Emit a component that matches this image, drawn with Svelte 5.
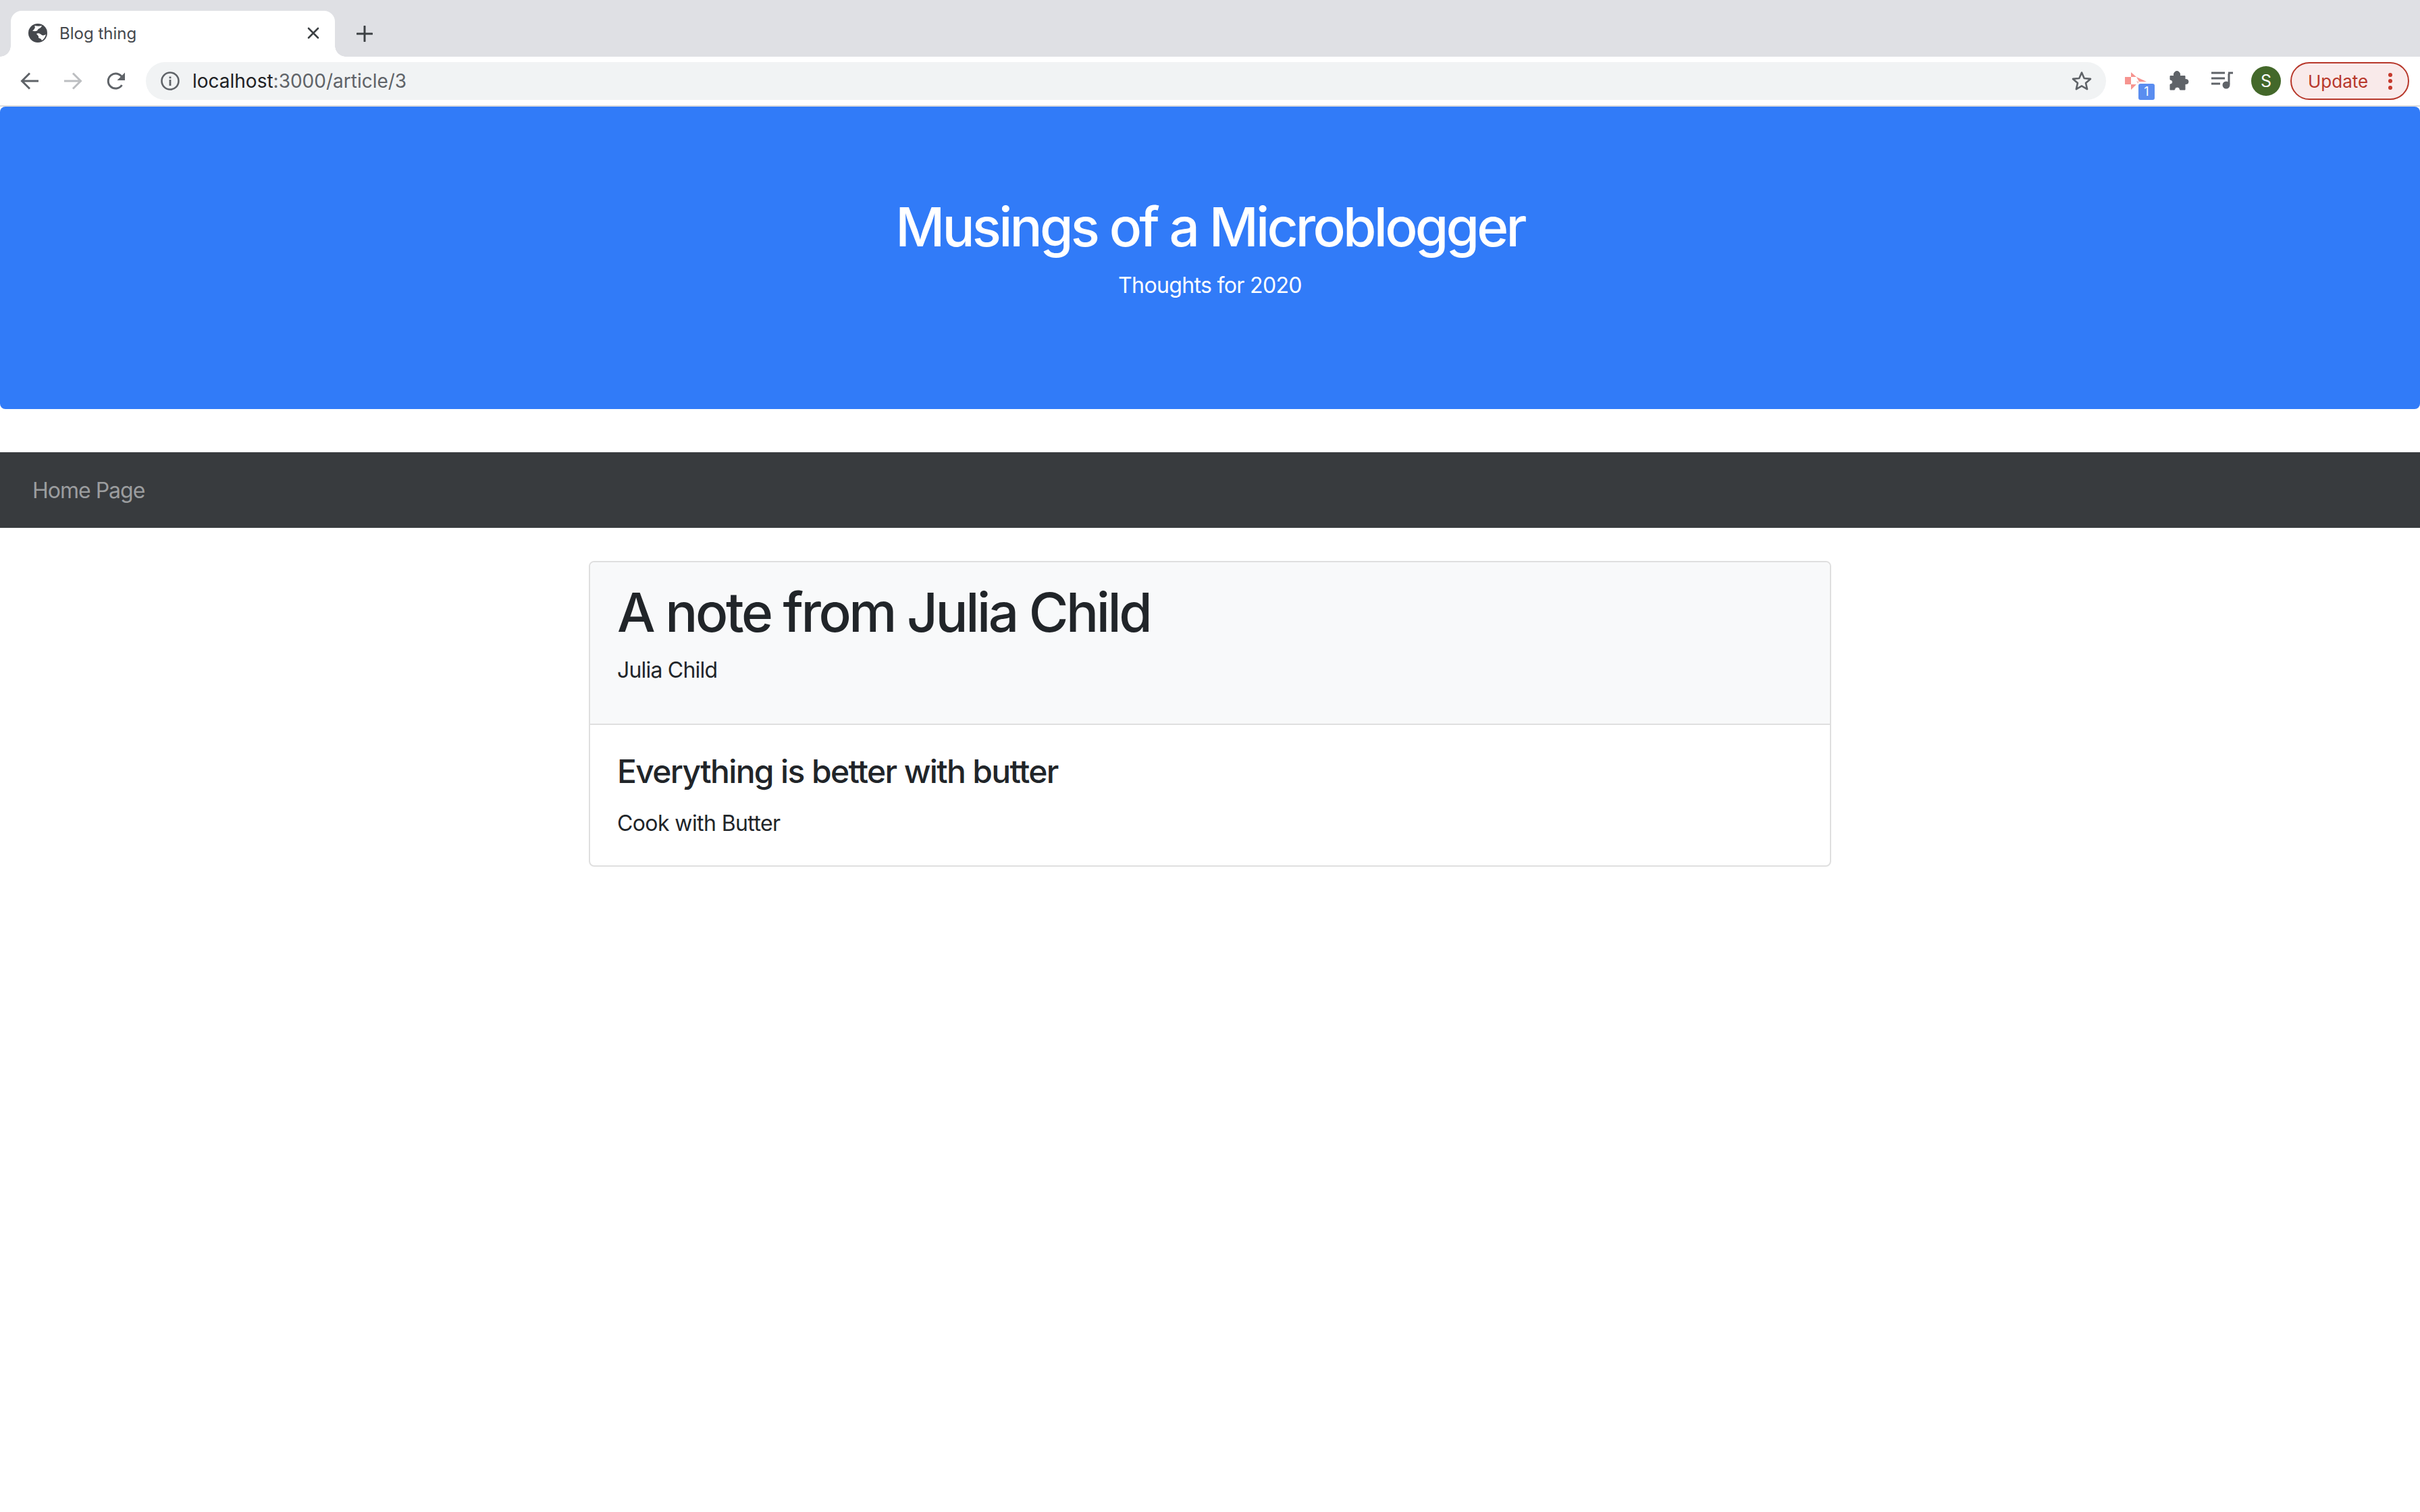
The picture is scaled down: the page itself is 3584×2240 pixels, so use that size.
<script>
    let tabTitle = 'Blog thing';
    let article = {
        title: 'A note from Julia Child',
        author: 'Julia Child',
        heading: 'Everything is better with butter',
        body: 'Cook with Butter'
    };
</script>

<div class="chrome">
    <div class="tabstrip">
        <div class="tab">
            <svg class="favicon" viewBox="0 0 28 28" width="28" height="28">
                <circle cx="14" cy="14" r="14" fill="#45484d" />
                <path d="M9 3C13 4 17 4 20 3C19 7 15 7 14 9C13 12 9 11 6 11C9 8 11 6 9 3z" fill="#fff" />
                <path d="M12 15C15 13 18 15 20 17C22 18 24 17 26 16C25 20 23 23 20 25C19 22 17 22 15 21C16 18 13 17 12 15z" fill="#fff" />
            </svg>
            <span class="tab-title">{tabTitle}</span>
            <svg class="tab-close" viewBox="0 0 18 18" width="18" height="18">
                <path d="M2 2l14 14M16 2L2 16" stroke="#3c4043" stroke-width="2.6" stroke-linecap="round" />
            </svg>
        </div>
        <svg class="new-tab" viewBox="0 0 24 24" width="24" height="24">
            <path d="M12 1v22M1 12h22" stroke="#3c4043" stroke-width="3" stroke-linecap="round" />
        </svg>
    </div>

    <div class="toolbar">
        <div class="nav-buttons">
            <svg viewBox="0 0 28 28" width="28" height="28">
                <path d="M27 14H3M14 2.500L2.500 14 14 25.500" fill="none" stroke="#5f6368" stroke-width="3" />
            </svg>
            <svg viewBox="0 0 28 28" width="28" height="28">
                <path d="M1 14h24M14 2.500L25.500 14 14 25.500" fill="none" stroke="#bcbec1" stroke-width="3" />
            </svg>
            <svg viewBox="0 0 28 28" width="28" height="28">
                <path d="M22.500 20a11 11 0 1 1 .5-11" fill="none" stroke="#5f6368" stroke-width="3" />
                <path d="M27 1.500V13H15.500z" fill="#5f6368" />
            </svg>
        </div>

        <div class="omnibox">
            <svg class="info" viewBox="0 0 28 28" width="28" height="28">
                <circle cx="14" cy="14" r="12.500" fill="none" stroke="#5f6368" stroke-width="2.600" />
                <rect x="12.600" y="12" width="2.800" height="9" fill="#5f6368" />
                <rect x="12.600" y="7.500" width="2.800" height="2.800" fill="#5f6368" />
            </svg>
            <span class="url"><span class="host">localhost</span>:3000/article/3</span>
            <svg class="star" viewBox="0 0 30 30" width="30" height="30">
                <path d="M15 2.500l3.700 8.500 9.300.9-7 6.100 2.100 9.100-8.100-4.800-8.100 4.800 2.100-9.100-7-6.100 9.300-.9z" fill="none" stroke="#5f6368" stroke-width="2.600" stroke-linejoin="round" />
            </svg>
        </div>

        <div class="extensions">
            <div class="ext-vpn">
                <svg viewBox="0 0 32 26" width="32" height="26">
                    <path d="M0 7h9v11H0zM9 0l8 7H9zM17 7l15 7H21zM9 18h8l-8 8z" fill="#f69490" />
                    <path d="M17 13l4 1-2 3z" fill="#f9c0bd" />
                </svg>
                <span class="ext-badge">1</span>
            </div>
            <svg class="puzzle" viewBox="0 0 30 30" width="30" height="30">
                <path d="M1 7.500H6.500V5a4.500 4.500 0 0 1 9 0V7.500H23V12.500H24.500a3.500 3.500 0 0 1 0 7H23V28H15.500a4 4 0 0 0-8 0H1V20a3.500 3.500 0 0 0 0-7z" fill="#5f6368" stroke="#5f6368" stroke-linejoin="round" />
            </svg>
            <svg class="media" viewBox="0 0 32 28" width="32" height="28">
                <path d="M0 2h20M0 10h20M0 18h13" stroke="#5f6368" stroke-width="3" />
                <path d="M26 3v16" stroke="#5f6368" stroke-width="3" />
                <path d="M25 2h7" stroke="#5f6368" stroke-width="3" />
                <circle cx="22" cy="20" r="5.500" fill="#5f6368" />
            </svg>
            <div class="avatar">S</div>
            <div class="update">
                <span>Update</span>
                <svg viewBox="0 0 8 26" width="8" height="26">
                    <circle cx="4" cy="4" r="3" fill="#c5392b" />
                    <circle cx="4" cy="13" r="3" fill="#c5392b" />
                    <circle cx="4" cy="23" r="3" fill="#c5392b" />
                </svg>
            </div>
        </div>
    </div>
</div>

<header class="jumbotron">
    <h1>Musings of a Microblogger</h1>
    <p>Thoughts for 2020</p>
</header>

<nav class="navbar">
    <a href="/">Home Page</a>
</nav>

<main class="card">
    <div class="card-header">
        <h1>{article.title}</h1>
        <p>{article.author}</p>
    </div>
    <div class="card-body">
        <h4>{article.heading}</h4>
        <p>{article.body}</p>
    </div>
</main>

<style>
    :global(body) {
        background: #fff;
        font-family: Inter, "Noto Sans", sans-serif;
        color: #212529;
    }

    h1, h4, p {
        margin: 0;
    }

    .chrome {
        height: 156px;
        border-bottom: 2px solid #d9dadc;
        background: #fff;
    }

    .tabstrip {
        display: flex;
        align-items: flex-end;
        height: 84px;
        padding-left: 16px;
        background: #dfe0e4;
    }

    .tab {
        position: relative;
        display: flex;
        align-items: center;
        width: 480px;
        height: 68px;
        box-sizing: border-box;
        padding: 0 22px 2px 26px;
        border-radius: 16px 16px 0 0;
        background: #fff;
    }

    .tab::before,
    .tab::after {
        content: '';
        position: absolute;
        bottom: 0;
        width: 16px;
        height: 16px;
    }

    .tab::before {
        left: -16px;
        background: radial-gradient(circle at 0 0, #dfe0e4 15.500px, #fff 16px);
    }

    .tab::after {
        right: -16px;
        background: radial-gradient(circle at 100% 0, #dfe0e4 15.500px, #fff 16px);
    }

    .tab-title {
        margin-left: 18px;
        font-size: 24px;
        color: #45484d;
    }

    .tab-close {
        margin-left: auto;
        margin-right: 1px;
    }

    .new-tab {
        margin: 0 0 22px 32px;
    }

    .toolbar {
        display: flex;
        align-items: center;
        height: 72px;
        padding-right: 16px;
    }

    .nav-buttons {
        display: flex;
        gap: 36px;
        padding-left: 30px;
        width: 186px;
    }

    .omnibox {
        display: flex;
        align-items: center;
        width: 2904px;
        height: 56px;
        box-sizing: border-box;
        padding: 0 21px 0 22px;
        border-radius: 28px;
        background: #f1f3f4;
    }

    .url {
        margin-left: 19px;
        font-size: 28px;
        color: #5f6368;
    }

    .host {
        color: #202124;
    }

    .star {
        margin-left: auto;
    }

    .extensions {
        display: flex;
        align-items: center;
        flex: 1;
        padding-left: 28px;
    }

    .ext-vpn {
        position: relative;
        width: 34px;
        height: 30px;
        padding-top: 2px;
        box-sizing: border-box;
    }

    .ext-badge {
        position: absolute;
        left: 20px;
        top: 19px;
        width: 24px;
        height: 24px;
        border-radius: 3px;
        background: #5a8df0;
        color: #fff;
        font-size: 18px;
        line-height: 24px;
        text-align: center;
    }

    .puzzle {
        margin-left: 32px;
    }

    .media {
        margin-left: 32px;
    }

    .avatar {
        width: 44px;
        height: 44px;
        margin-left: 27px;
        border-radius: 50%;
        background: #43682a;
        color: #fff;
        font-size: 25px;
        line-height: 44px;
        text-align: center;
    }

    .update {
        display: flex;
        align-items: center;
        justify-content: space-between;
        width: 176px;
        height: 56px;
        box-sizing: border-box;
        margin-left: 14px;
        padding: 0 22px 0 24px;
        border: 2px solid #b7372a;
        border-radius: 28px;
        background: #f9eaea;
        color: #b7372a;
        font-size: 26px;
    }

    .jumbotron {
        height: 448px;
        box-sizing: border-box;
        padding-top: 130px;
        border-radius: 8px;
        background: #317bf8;
        color: #fff;
        text-align: center;
    }

    .jumbotron h1 {
        font-size: 80px;
        font-weight: 500;
        line-height: 96px;
        letter-spacing: -3.75px;
    }

    .jumbotron p {
        margin-top: 15px;
        font-size: 32px;
        line-height: 48px;
        letter-spacing: -0.65px;
    }

    .navbar {
        display: flex;
        align-items: center;
        height: 112px;
        margin-top: 64px;
        padding-left: 48px;
        background: #383b3e;
    }

    .navbar a {
        color: #9b9d9f;
        font-size: 32px;
        letter-spacing: -1px;
        text-decoration: none;
    }

    .card {
        width: 1840px;
        box-sizing: border-box;
        margin: 49px auto 0;
        border: 2px solid #dfdfdf;
        border-radius: 8px;
        overflow: hidden;
    }

    .card-header {
        height: 241px;
        box-sizing: border-box;
        padding: 26px 40px 0;
        border-bottom: 2px solid #dfdfdf;
        background: #f8f9fa;
    }

    .card-header h1 {
        font-size: 80px;
        font-weight: 500;
        line-height: 96px;
        letter-spacing: -3.4px;
    }

    .card-header p {
        margin-top: 14px;
        font-size: 32px;
        line-height: 48px;
        letter-spacing: -0.8px;
    }

    .card-body {
        padding: 40px 40px 38px;
    }

    .card-body h4 {
        font-size: 48px;
        font-weight: 500;
        line-height: 58px;
        letter-spacing: -1.65px;
    }

    .card-body p {
        margin-top: 24px;
        font-size: 32px;
        line-height: 48px;
        letter-spacing: -0.6px;
    }
</style>
